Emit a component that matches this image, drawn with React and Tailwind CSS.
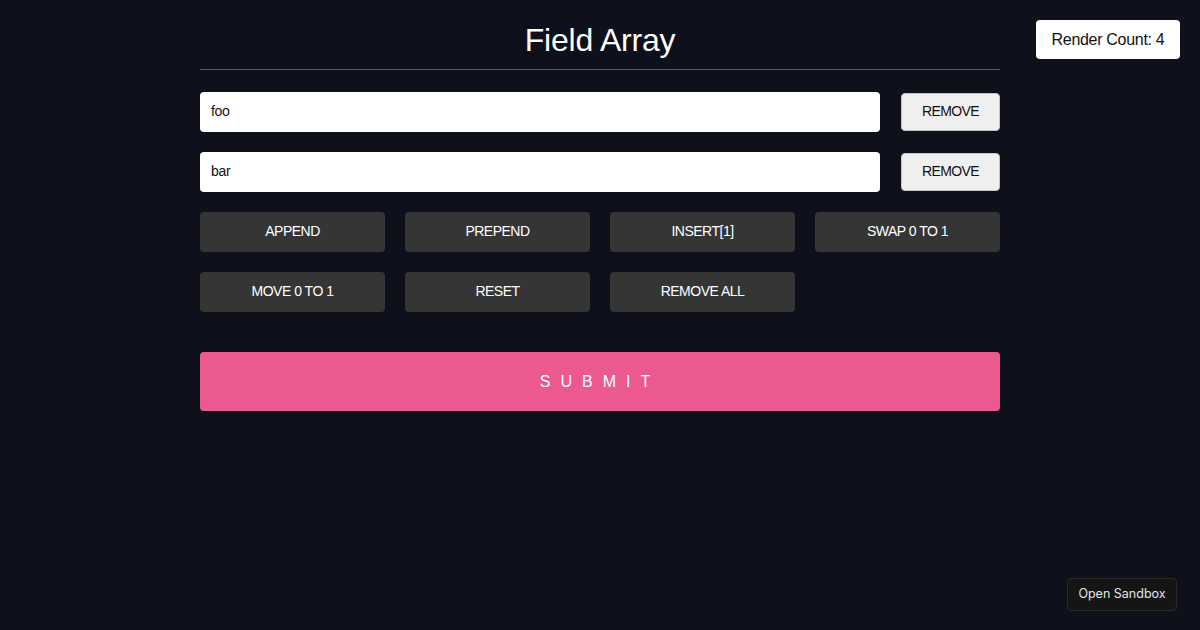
export default function App() {
  const fields = ['foo', 'bar'];
  const actions = ['APPEND', 'PREPEND', 'INSERT[1]', 'SWAP 0 TO 1', 'MOVE 0 TO 1', 'RESET', 'REMOVE ALL'];

  return (
    <div className="relative min-h-[630px] bg-[#0e101c] font-['Liberation_Sans',Arial,sans-serif] text-white">
      <div className="absolute top-[20px] right-[20px] flex h-[39px] w-[144px] items-center justify-center rounded bg-white text-[16px] tracking-[-0.3px] text-[#111]">
        Render Count: 4
      </div>

      <div className="mx-auto w-[800px] pt-[20px]">
        <h1 className="border-b border-[#4f5878] pb-[9px] text-center text-[32px] leading-[40px] font-normal tracking-[-0.2px]">
          Field Array
        </h1>

        <div className="mt-[22px] flex flex-col gap-[20px]">
          {fields.map((value) => (
            <div key={value} className="flex items-center gap-[21px]">
              <input
                defaultValue={value}
                className="h-[40px] flex-1 rounded bg-white px-[11px] pb-[2px] text-[14px] tracking-[-0.3px] text-[#111] outline-none"
              />
              <button className="h-[38px] w-[99px] rounded border border-[#c4c4c4] bg-[#efefef] pb-[2px] text-[14px] tracking-[-0.6px] text-[#111]">
                REMOVE
              </button>
            </div>
          ))}

          <div className="grid grid-cols-4 gap-[20px]">
            {actions.map((label) => (
              <button key={label} className="h-[40px] rounded bg-[#353535] pb-[2px] text-[14px] tracking-[-0.5px] text-white">
                {label}
              </button>
            ))}
          </div>
        </div>

        <button className="mt-[40px] h-[59px] w-full rounded bg-[#ec5990] text-[16px] tracking-[10px] text-white">
          SUBMIT
        </button>
      </div>

      <button className="absolute right-[23px] bottom-[19px] h-[33px] w-[110px] rounded border border-[#2a2a2a] bg-[#151515] font-['Inter',sans-serif] text-[12.5px] text-[#e5e5e5]">
        Open Sandbox
      </button>
    </div>
  );
}
